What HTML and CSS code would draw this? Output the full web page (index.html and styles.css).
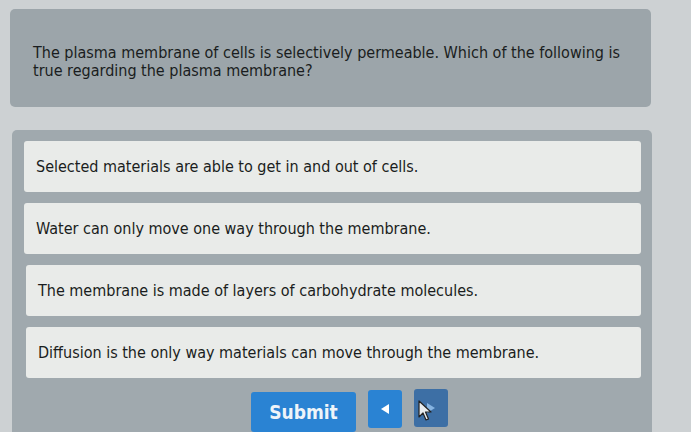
FILE: index.html
```html
<!DOCTYPE html>
<html>
<head>
<meta charset="utf-8">
<link rel="stylesheet" href="styles.css">
</head>
<body>
<div class="page">
  <div class="question">
    <p>The plasma membrane of cells is selectively permeable. Which of the following is true regarding the plasma membrane?</p>
  </div>
  <div class="answers">
    <div class="answer">Selected materials are able to get in and out of cells.</div>
    <div class="answer a2">Water can only move one way through the membrane.</div>
    <div class="answer a3">The membrane is made of layers of carbohydrate molecules.</div>
    <div class="answer a4">Diffusion is the only way materials can move through the membrane.</div>
    <div class="controls">
      <button class="submit">Submit</button>
      <button class="nav prev"><svg width="10" height="12" viewBox="0 0 10 12"><polygon points="9,1 9,11 1,6" fill="#ffffff"/></svg></button>
      <button class="nav next"><svg width="10" height="12" viewBox="0 0 10 12"><polygon points="1,1 1,11 9,6" fill="#86b4e2"/></svg>
        <svg class="cursor" width="14" height="22" viewBox="0 0 14 22"><path d="M1 1 L1 17 L5 13 L8 20 L10.5 19 L7.5 12 L13 12 Z" fill="#e8ecee" stroke="#222" stroke-width="1.2" stroke-linejoin="round"/></svg>
      </button>
    </div>
  </div>
</div>
</body>
</html>
```
FILE: styles.css
```css
html, body {
  margin: 0;
  padding: 0;
}
body {
  background: #cdd1d3;
  font-family: "Liberation Sans Narrow", "DejaVu Sans Condensed", "Liberation Sans", sans-serif;
  color: #1a1d20;
  width: 691px;
  height: 432px;
  overflow: hidden;
}
.page {
  padding-top: 9px;
}
.question {
  margin-left: 10px;
  width: 641px;
  height: 98px;
  box-sizing: border-box;
  background: #9ca5aa;
  border-radius: 5px;
  padding: 35px 16px 0 23px;
}
.question p {
  margin: 0;
  font-size: 16px;
  line-height: 18px;
}
.answers {
  margin-top: 23px;
  margin-left: 12px;
  width: 640px;
  box-sizing: border-box;
  background: #a0a9ae;
  border-radius: 5px 5px 0 0;
  padding: 11px 11px 0 12px;
  height: 310px;
}
.answer {
  height: 51px;
  box-sizing: border-box;
  background: #e9ebe9;
  border-radius: 3px;
  margin-bottom: 11px;
  padding-left: 12px;
  display: flex;
  align-items: center;
  font-size: 16px;
}
.a3, .a4 {
  margin-left: 2px;
}
.controls {
  display: flex;
  align-items: flex-start;
  gap: 12px;
  margin-top: 4px;
  margin-left: 227px;
}
button {
  border: none;
  padding: 0;
  font-family: inherit;
}
.submit {
  width: 105px;
  height: 40px;
  background: #2a83d3;
  color: #eef4f9;
  font-size: 19px;
  font-weight: bold;
  border-radius: 3px;
  margin-top: 3px;
}
.nav {
  width: 34px;
  height: 38px;
  border-radius: 3px;
  display: flex;
  align-items: center;
  justify-content: center;
  position: relative;
}
.prev {
  background: #2a83d3;
  margin-top: 1px;
}
.next {
  background: #3d6fa5;
}
.cursor {
  position: absolute;
  left: 4px;
  top: 11px;
}
```
